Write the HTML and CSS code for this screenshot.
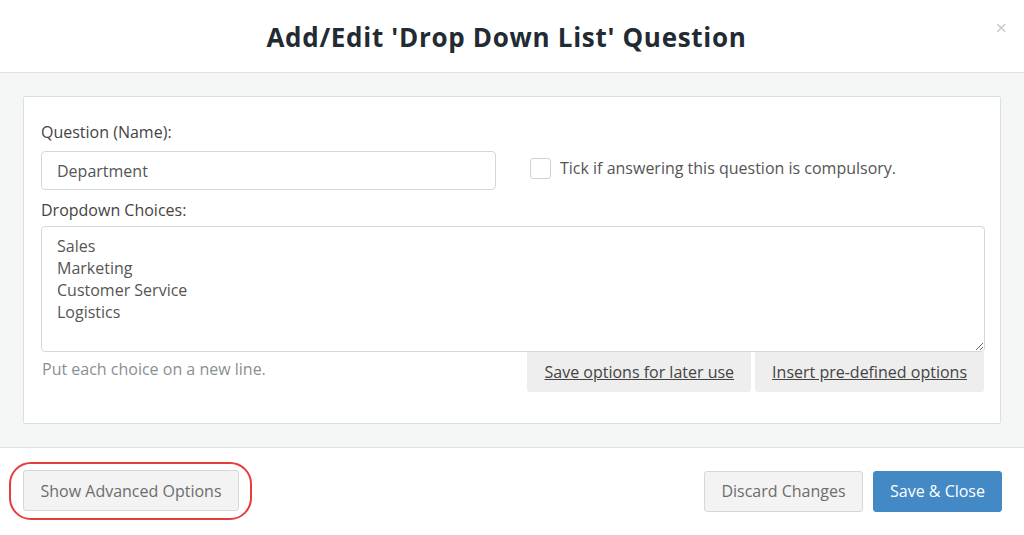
FILE: index.html
```html
<!DOCTYPE html>
<html>
<head>
<meta charset="utf-8">
<link rel="stylesheet" href="styles.css">
</head>
<body>
<div class="modal">
  <header class="modal-header">
    <h1 class="title">Add/Edit 'Drop Down List' Question</h1>
    <span class="close">×</span>
  </header>
  <main class="modal-body">
    <section class="card">
      <div class="top-row">
        <div class="field">
          <label class="label">Question (Name):</label>
          <input class="input" type="text" value="Department">
        </div>
        <label class="check">
          <span class="box"></span>
          <span class="check-text">Tick if answering this question is compulsory.</span>
        </label>
      </div>
      <label class="label label-tight">Dropdown Choices:</label>
      <textarea class="textarea">Sales
Marketing
Customer Service
Logistics</textarea>
      <div class="under-row">
        <span class="help">Put each choice on a new line.</span>
        <div class="link-btns">
          <button class="link-btn">Save options for later use</button>
          <button class="link-btn">Insert pre-defined options</button>
        </div>
      </div>
    </section>
  </main>
  <footer class="modal-footer">
    <div class="highlight">
      <button class="btn">Show Advanced Options</button>
    </div>
    <div class="right-btns">
      <button class="btn">Discard Changes</button>
      <button class="btn primary">Save &amp; Close</button>
    </div>
  </footer>
</div>
</body>
</html>
```

FILE: styles.css
```css
* { box-sizing: border-box; }
html, body {
  margin: 0;
  padding: 0;
  background: #fff;
}
body {
  font-family: "Open Sans", "Liberation Sans", sans-serif;
  color: #555;
  width: 1024px;
  height: 535px;
  overflow: hidden;
}
.modal {
  display: flex;
  flex-direction: column;
  height: 535px;
}
.modal-header {
  height: 73px;
  border-bottom: 1px solid #dfe3e5;
  display: flex;
  align-items: center;
  justify-content: center;
  position: relative;
  padding-right: 11px;
}
.title {
  margin: 0;
  font-size: 26px;
  font-weight: 700;
  color: #222a33;
  letter-spacing: 0.7px;
  padding-top: 1px;
}
.close {
  position: absolute;
  right: 17px;
  top: 14px;
  font-size: 20px;
  color: #c8c8c8;
  font-weight: 400;
}
.modal-body {
  background: #f5f6f6;
  padding: 23px 23px 23px 23px;
  border-bottom: 1px solid #dfe3e5;
  height: 375px;
}
.card {
  background: #fff;
  border: 1px solid #dbe0e2;
  border-radius: 2px;
  padding: 24px 17px 30px 17px;
  height: 328px;
}
.top-row {
  display: grid;
  grid-template-columns: 455px 1fr;
  column-gap: 34px;
  align-items: end;
}
.field { display: flex; flex-direction: column; }
.label {
  display: block;
  font-size: 16px;
  line-height: 22px;
  color: #444;
  margin-bottom: 8px;
}
.label-tight { margin-bottom: 5px; }
.input {
  width: 455px;
  height: 39px;
  border: 1px solid #d3d7da;
  border-radius: 4px;
  padding: 0 15px;
  font-family: inherit;
  font-size: 16px;
  color: #555;
  margin-bottom: 9px;
}
.check {
  display: flex;
  align-items: center;
  gap: 9px;
  margin-bottom: 20px;
}
.box {
  width: 21px;
  height: 21px;
  border: 1px solid #cfd3d6;
  border-radius: 3px;
  background: #fff;
}
.check-text {
  font-size: 16px;
  color: #555;
  line-height: 22px;
}
.textarea {
  display: block;
  width: 944px;
  height: 126px;
  border: 1px solid #d3d7da;
  border-radius: 4px;
  padding: 8px 15px;
  font-family: inherit;
  font-size: 16px;
  line-height: 22px;
  color: #555;
  resize: vertical;
}
.under-row {
  display: flex;
  justify-content: space-between;
  align-items: flex-start;
}
.help {
  font-size: 16px;
  color: #8a8f93;
  padding-top: 6px;
  padding-left: 1px;
}
.link-btns {
  display: flex;
  gap: 4px;
  margin-right: -1px;
}
.link-btn {
  height: 40px;
  border: none;
  background: #eeeeee;
  border-radius: 0 0 3px 3px;
  font-family: inherit;
  font-size: 16px;
  color: #444;
  text-decoration: underline;
  padding: 0 17px;
}
.modal-footer {
  flex: 1;
  display: flex;
  justify-content: space-between;
  align-items: center;
  padding: 0 22px 1px 9px;
}
.highlight {
  border: 2px solid #e53d3d;
  border-radius: 22px;
  padding: 6px 11px 7px 12px;
}
.btn {
  height: 41px;
  border: 1px solid #d5d8da;
  border-radius: 3px;
  background: #f3f3f3;
  font-family: inherit;
  font-size: 16px;
  color: #6d6d6d;
  padding: 0 16px;
}
.highlight .btn { width: 216px; }
.right-btns {
  display: flex;
  gap: 10px;
}
.right-btns .btn:first-child { width: 159px; }
.btn.primary {
  background: #4389c5;
  border-color: #4389c5;
  color: #fff;
  width: 129px;
}
```
